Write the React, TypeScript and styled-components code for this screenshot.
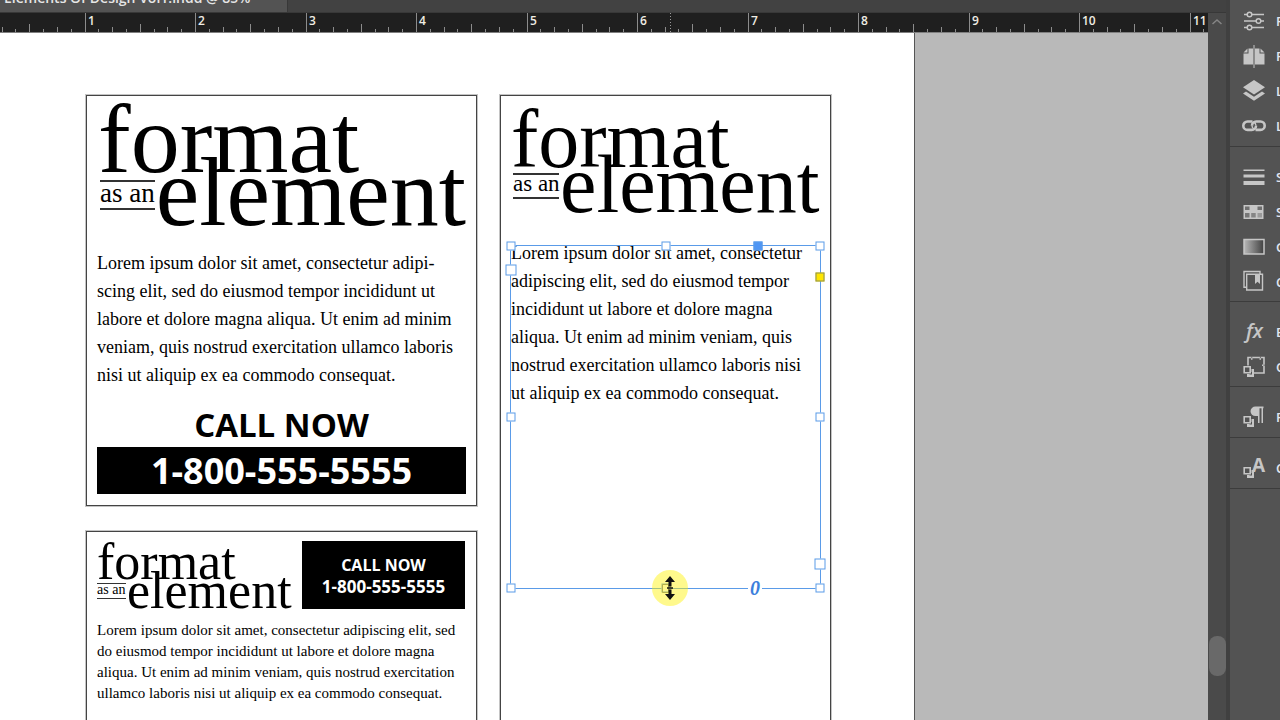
import React from 'react';
import styled, { createGlobalStyle } from 'styled-components';

const SERIF = '"Liberation Serif", "Times New Roman", serif';
const SANS = '"Open Sans", "Noto Sans", sans-serif';

const GlobalStyle = createGlobalStyle`
  *, *::before, *::after { box-sizing: border-box; }
  body { margin: 0; background: #535353; overflow: hidden; }
  p, h1, h2 { margin: 0; font-weight: normal; }
`;

const Shell = styled.div`
  display: flex;
  height: 100vh;
  overflow: hidden;
  background: #535353;
`;

const Workspace = styled.main`
  flex: 1;
  min-width: 0;
  display: flex;
  flex-direction: column;
  background: #424242;
`;

const TabBar = styled.div`
  flex: none;
  display: flex;
  height: 13px;
  overflow: hidden;
  border-bottom: 1px solid #383838;
`;

const Tab = styled.button`
  display: flex;
  align-items: flex-end;
  width: 288px;
  height: 12px;
  padding: 0 0 6px 4px;
  border: 0;
  border-right: 1px solid #383838;
  background: #535353;
  color: #e6e6e6;
  font: 600 14px/16px ${SANS};
  text-align: left;
  white-space: nowrap;
`;

const Body = styled.div`
  flex: 1;
  min-height: 0;
  display: flex;
`;

const View = styled.div`
  flex: 1;
  min-width: 0;
  display: flex;
  flex-direction: column;
  background: #b9b9b9;
`;

const RulerBar = styled.div`
  flex: none;
  height: 20px;
  overflow: hidden;
  background: #1f1f1f;
  border-bottom: 1px solid #808080;
`;

const Scrollbar = styled.div`
  flex: none;
  display: flex;
  flex-direction: column;
  align-items: center;
  justify-content: space-between;
  width: 18px;
  padding: 3px 0 44px;
  background: #4a4a4a;
`;

const ScrollButton = styled.button`
  display: flex;
  padding: 0;
  border: 0;
  background: none;
`;

const Thumb = styled.div`
  width: 17px;
  height: 40px;
  border-radius: 8px;
  background: #696969;
`;

const Page = styled.div`
  flex: 1;
  min-height: 0;
  display: flex;
  align-items: flex-start;
  gap: 23px;
  width: 915px;
  padding: 62px 83px 0 86px;
  overflow: hidden;
  background: #fff;
  border-right: 1px solid #555;
  color: #000;
`;

const Column = styled.div<{ $grow: number }>`
  flex: ${(p) => p.$grow} 1 0;
  min-width: 0;
  display: flex;
  flex-direction: column;
  gap: 25px;
`;

const Ad = styled.article<{ $pad: string; $min?: number }>`
  display: flex;
  flex-direction: column;
  padding: ${(p) => p.$pad};
  min-height: ${(p) => p.$min ?? 0}px;
  border: 1px solid #444;
  box-shadow: 0 0 0 1px #c4c4c4;
`;

const Mark = styled.h1<{ $size: number; $pitch: number; $inset: string }>`
  display: flex;
  flex-direction: column;
  padding: ${(p) => p.$inset};
  font-family: ${SERIF};
  font-size: ${(p) => p.$size}px;
  line-height: ${(p) => p.$pitch}px;
  white-space: nowrap;
`;

const MarkRow = styled.span<{ $indent: number }>`
  display: flex;
  align-items: flex-start;
  gap: 1px;
  padding-left: ${(p) => p.$indent}px;
`;

const Ruled = styled.small<{ $size: number; $line: number; $height: number; $drop: number; $width: number; $rule: string }>`
  width: ${(p) => p.$width}px;
  height: ${(p) => p.$height}px;
  margin-top: ${(p) => p.$drop}px;
  border: solid #333;
  border-width: ${(p) => p.$rule};
  font-size: ${(p) => p.$size}px;
  line-height: ${(p) => p.$line}px;
`;

const Copy = styled.p<{ $size: number; $line: number; $top: number }>`
  margin-top: ${(p) => p.$top}px;
  font: ${(p) => p.$size}px/${(p) => p.$line}px ${SERIF};
  white-space: pre;
`;

const Call = styled.h2`
  margin-top: 18px;
  font: 700 33px/36px ${SANS};
  text-align: center;
`;

const PhoneBar = styled.p`
  margin-top: 4px;
  background: #000;
  color: #fff;
  font: 700 36px/47px ${SANS};
  text-align: center;
`;

const SplitHead = styled.div`
  display: flex;
  justify-content: space-between;
`;

const CallBox = styled.div`
  flex: none;
  display: flex;
  flex-direction: column;
  justify-content: center;
  width: 163px;
  height: 68px;
  padding-top: 2px;
  background: #000;
  color: #fff;
  font: 700 17px/21px ${SANS};
  text-align: center;
`;

const CallSmall = styled.span`
  font-size: 16px;
`;

const TextFrame = styled.div`
  position: relative;
  height: 344px;
  margin-top: 38px;
  border: 1px solid #5a9be8;
`;

const Handle = styled.i<{ $x: string; $y: string; $size?: number; $fill?: string; $edge?: string }>`
  position: absolute;
  left: ${(p) => p.$x};
  top: ${(p) => p.$y};
  width: ${(p) => p.$size ?? 9}px;
  height: ${(p) => p.$size ?? 9}px;
  transform: translate(-50%, -50%);
  border: 1px solid ${(p) => p.$edge ?? '#5a9be8'};
  background: ${(p) => p.$fill ?? '#fff'};
`;

const Overflow = styled.span`
  position: absolute;
  left: 79%;
  top: 100%;
  padding: 0 2px;
  transform: translate(-50%, -50%);
  background: #fff;
  color: #3c7fdc;
  font: italic 700 20px/20px ${SERIF};
`;

const Cursor = styled.svg`
  position: absolute;
  left: calc(50% + 4px);
  top: 100%;
  transform: translate(-50%, -50%);
`;

const Dock = styled.aside`
  flex: none;
  width: 54px;
  overflow: hidden;
  background: #535353;
  border-left: 4px solid #404040;
`;

const Group = styled.div<{ $pad: string }>`
  display: flex;
  flex-direction: column;
  padding: ${(p) => p.$pad};
  border-bottom: 1px solid #3c3c3c;
`;

const PanelButton = styled.button`
  display: flex;
  align-items: center;
  gap: 10px;
  width: 180px;
  height: 35px;
  padding: 0 0 0 12px;
  border: 0;
  background: none;
  color: #e2e6ee;
  font: 600 13px/16px ${SANS};
  text-align: left;
  white-space: nowrap;
`;

const PanelIcon = styled.svg`
  flex: none;
`;

const ORIGIN = -26;
const INCH = 1105;

function Ruler() {
  const ticks: React.ReactNode[] = [];
  for (let k = 0; k <= 8 * 16; k++) {
    const x = Math.round(ORIGIN + (INCH * k) / 80) + 0.5;
    const h = k % 8 === 0 ? 19 : k % 4 === 0 ? 8 : k % 2 === 0 ? 5 : 3;
    ticks.push(<path key={k} d={`M${x} ${19 - h}V19`} />);
  }
  const labels = Array.from({ length: 15 }, (_, i) => i + 1);
  return (
    <RulerBar>
      <svg width="100%" height="19" aria-label="Horizontal ruler">
        <g stroke="#8c8c8c">{ticks}</g>
        <path d="M670.5 0V19" stroke="#9a9a9a" strokeDasharray="1 2" />
        <g fill="#f0ede4" fontFamily="Open Sans, sans-serif" fontSize="12" fontWeight="600">
          {labels.map((n) => (
            <text key={n} x={Math.round(ORIGIN + (INCH * n) / 10) + 3} y="12">{n}</text>
          ))}
        </g>
      </svg>
    </RulerBar>
  );
}

type LogoProps = {
  size: number; pitch: number; small: number; line: number; height: number;
  drop: number; width: number; rule?: string; inset?: string; indent?: number;
};

function Logo({ size, pitch, small, line, height, drop, width, rule = '2px 0', inset = '0 0 0 1px', indent = 2 }: LogoProps) {
  return (
    <Mark $size={size} $pitch={pitch} $inset={inset}>
      <span>format</span>
      <MarkRow $indent={indent}>
        <Ruled $size={small} $line={line} $height={height} $drop={drop} $width={width} $rule={rule}>as an</Ruled>
        <span>element</span>
      </MarkRow>
    </Mark>
  );
}

const C = '#c6c6c6';
const BG = '#535353';

const StyleSquares = () => (
  <g>
    <path d="M5 14h7v8H5z" fill={C} />
    <path d="M7.500 17h2.500v2.500H7.500z" fill={BG} />
    <path d="M1 10.500h8.500v8.500H1z" fill={BG} />
    <path d="M2.200 11.700h6v6h-6z" fill={BG} stroke={C} strokeWidth="1.600" />
  </g>
);

const icons: Record<string, React.ReactNode> = {
  properties: (
    <g fill="none" stroke={C} strokeWidth="1.500">
      <path d="M2 5.500h3M10 5.500h12M2 12h12M19 12h3M2 18.500h3M10 18.500h12" />
      <circle cx="7.500" cy="5.500" r="2.300" /><circle cx="16.500" cy="12" r="2.300" /><circle cx="7.500" cy="18.500" r="2.300" />
    </g>
  ),
  pages: (
    <g fill={C}>
      <path d="M6.500 4.500H11V20.500H1.500V9.500h5zM5.500 4.500v4h-4zM13 4.500h4.500v5h5v11H13zM18.500 4.500v4h4z" />
      <path d="M11.500 1h1v23h-1z" />
    </g>
  ),
  layers: (
    <g fill={C}>
      <path d="M12 1l11 7.300-11 7.300L1 8.300z" />
      <path d="M1 14.500l3-2 8 5.300 8-5.300 3 2-11 7.300z" />
    </g>
  ),
  links: (
    <g fill="none" strokeWidth="2.600">
      <path d="M10.500 7.500H5.500a4.200 4.200 0 0 0 0 8.400h4.300a4.200 4.200 0 0 0 4.200-4.200" stroke={C} />
      <path d="M13.500 15.900h5a4.200 4.200 0 0 0 0-8.400h-4.300a4.200 4.200 0 0 0-4.200 4.200" stroke={C} />
      <path d="M14 11.700c0-1.500-1-3-2.500-3.700M10 11.700c0 1.500 1 3 2.500 3.700" stroke={C} strokeWidth="1.400" />
    </g>
  ),
  stroke: <path d="M1.500 4.500h21v1.500h-21zM1.500 9.500h21v3h-21zM1.500 16h21v4h-21z" fill={C} />,
  swatches: (
    <g>
      <path d="M1.500 5h20v14h-20z" fill={C} />
      <path d="M3 6.500h4.500v3.500H3zM15.500 6.500H20v3.500h-4.500z" fill="#6f6f6f" />
      <path d="M3 13h4.500v4.500H3z" fill="#777" />
      <path d="M9.200 13h4.500v4.500H9.200z" fill="#858585" />
      <path d="M15.500 13H20v4.500h-4.500z" fill="#9a9a9a" />
    </g>
  ),
  gradient: (
    <g>
      <defs><linearGradient id="fade"><stop offset="0" stopColor="#b8b8b8" /><stop offset="1" stopColor="#3f3f3f" /></linearGradient></defs>
      <path d="M2 4.500h20v14.500H2z" fill="url(#fade)" stroke={C} strokeWidth="1.500" />
    </g>
  ),
  libraries: (
    <g fill="none" stroke={C} strokeWidth="1.400">
      <path d="M4.700 4.200h15.800v15.800H4.700z" /><path d="M4 17.300H2V1.500h16v2.500" />
      <path d="M13 4.500h5v9.500l-2.500-2.200L13 14z" fill={C} stroke="none" />
    </g>
  ),
  effects: (
    <text x="4" y="18" fill={C} fontFamily="Open Sans, sans-serif" fontStyle="italic" fontSize="20">fx</text>
  ),
  object: (
    <g>
      <path d="M6 2.500h16v15.500H6z" fill="none" stroke={C} strokeWidth="1.600" />
      <path d="M9 3.300h1.500v1.500H9zM17.500 3.300H19v1.500h-1.500zM20 9.500h1.300v1.500H20z" fill={C} />
      <path d="M9.400 1.500h.8v1.500h-.8zM17.900 1.500h.8v1.500h-.8zM21.500 9.800H23v.8h-1.500z" fill={BG} />
      <StyleSquares />
    </g>
  ),
  paragraph: (
    <g>
      <path d="M21.500 1.500H13.500a5 4.800 0 0 0 0 9.600h2.500v7h1.500V3.200h2V18h1.500V3.200h.500z" fill={C} />
      <StyleSquares />
    </g>
  ),
  character: (
    <g>
      <text x="10" y="16" fill={C} fontFamily="Open Sans, sans-serif" fontWeight="700" fontSize="19">A</text>
      <StyleSquares />
    </g>
  ),
};

function Panel({ icon, label }: { icon: string; label: string }) {
  return (
    <PanelButton>
      <PanelIcon width="24" height="24" viewBox="0 0 24 24" aria-hidden="true">{icons[icon]}</PanelIcon>
      <span>{label}</span>
    </PanelButton>
  );
}

export default function App() {
  return (
    <Shell>
      <GlobalStyle />
      <Workspace>
        <TabBar><Tab>Elements Of Design Vol1.indd @ 85%</Tab></TabBar>
        <Body>
          <View>
            <Ruler />
            <Page>
              <Column $grow={391}>
                <Ad $pad="17px 10px 11px">
                  <Logo size={98} pitch={53} small={27} line={22} height={30} drop={14} width={55} />
                  <Copy $size={18} $line={28} $top={30}>
                    {'Lorem ipsum dolor sit amet, consectetur adipi-\nscing elit, sed do eiusmod tempor incididunt ut\nlabore et dolore magna aliqua. Ut enim ad minim\nveniam, quis nostrud exercitation ullamco laboris\nnisi ut aliquip ex ea commodo consequat.'}
                  </Copy>
                  <Call>CALL NOW</Call>
                  <PhoneBar>1-800-555-5555</PhoneBar>
                </Ad>
                <Ad $pad="9px 11px 20px 10px" $min={260}>
                  <SplitHead>
                    <Logo size={52} pitch={29} small={14} line={12} height={16} drop={7} width={29} rule="1px 0" inset="6px 0 0" indent={0} />
                    <CallBox><CallSmall>CALL NOW</CallSmall><span>1-800-555-5555</span></CallBox>
                  </SplitHead>
                  <Copy $size={15} $line={21} $top={11}>
                    {'Lorem ipsum dolor sit amet, consectetur adipiscing elit, sed\ndo eiusmod tempor incididunt ut labore et dolore magna\naliqua. Ut enim ad minim veniam, quis nostrud exercitation\nullamco laboris nisi ut aliquip ex ea commodo consequat.'}
                  </Copy>
                </Ad>
              </Column>
              <Column $grow={331}>
                <Ad $pad="21px 9px 0" $min={700}>
                  <Logo size={82} pitch={45} small={23} line={18} height={26} drop={11} width={46} />
                  <TextFrame>
                    <Copy $size={18} $line={28} $top={-7}>
                      {'Lorem ipsum dolor sit amet, consectetur\nadipiscing elit, sed do eiusmod tempor\nincididunt ut labore et dolore magna\naliqua. Ut enim ad minim veniam, quis\nnostrud exercitation ullamco laboris nisi\nut aliquip ex ea commodo consequat.'}
                    </Copy>
                    <Handle $x="0%" $y="0%" /><Handle $x="50%" $y="0%" /><Handle $x="100%" $y="0%" />
                    <Handle $x="80%" $y="0%" $fill="#4f96f5" />
                    <Handle $x="0%" $y="50%" /><Handle $x="100%" $y="50%" />
                    <Handle $x="0%" $y="100%" /><Handle $x="50%" $y="100%" /><Handle $x="100%" $y="100%" />
                    <Handle $x="0%" $y="7%" $size={11} /><Handle $x="100%" $y="93%" $size={11} />
                    <Handle $x="100%" $y="9%" $fill="#ffe600" $edge="#8a8f5a" />
                    <Overflow>0</Overflow>
                    <Cursor width="36" height="36" viewBox="0 0 36 36" aria-hidden="true">
                      <circle cx="18" cy="18" r="18" fill="#fff200" fillOpacity="0.45" />
                      <path d="M10.500 14.500h6v8h-6z" fill="none" stroke="#b5b04a" />
                      <path d="M18 6l5 6h-3.500v4.500h-3V12H13zM18 30l5-6h-3.500v-4.500h-3V24H13zM15 17.300h6v1.500h-6z" fill="#111" />
                    </Cursor>
                  </TextFrame>
                </Ad>
              </Column>
            </Page>
          </View>
          <Scrollbar>
            <ScrollButton aria-label="Scroll up">
              <svg width="12" height="12" viewBox="0 0 12 12"><path d="M1.500 8L6 4l4.500 4" fill="none" stroke="#858585" strokeWidth="1.500" /></svg>
            </ScrollButton>
            <Thumb />
          </Scrollbar>
        </Body>
      </Workspace>
      <Dock>
        <Group $pad="3px 0">
          <Panel icon="properties" label="Properties" />
          <Panel icon="pages" label="Pages" />
          <Panel icon="layers" label="Layers" />
          <Panel icon="links" label="Links" />
        </Group>
        <Group $pad="12px 0 2px">
          <Panel icon="stroke" label="Stroke" />
          <Panel icon="swatches" label="Swatches" />
          <Panel icon="gradient" label="Gradient" />
          <Panel icon="libraries" label="CC Libraries" />
        </Group>
        <Group $pad="12px 0 2px">
          <Panel icon="effects" label="Effects" />
          <Panel icon="object" label="Object Styles" />
        </Group>
        <Group $pad="12px 0 3px"><Panel icon="paragraph" label="Paragraph Styles" /></Group>
        <Group $pad="12px 0 3px"><Panel icon="character" label="Character Styles" /></Group>
      </Dock>
    </Shell>
  );
}
